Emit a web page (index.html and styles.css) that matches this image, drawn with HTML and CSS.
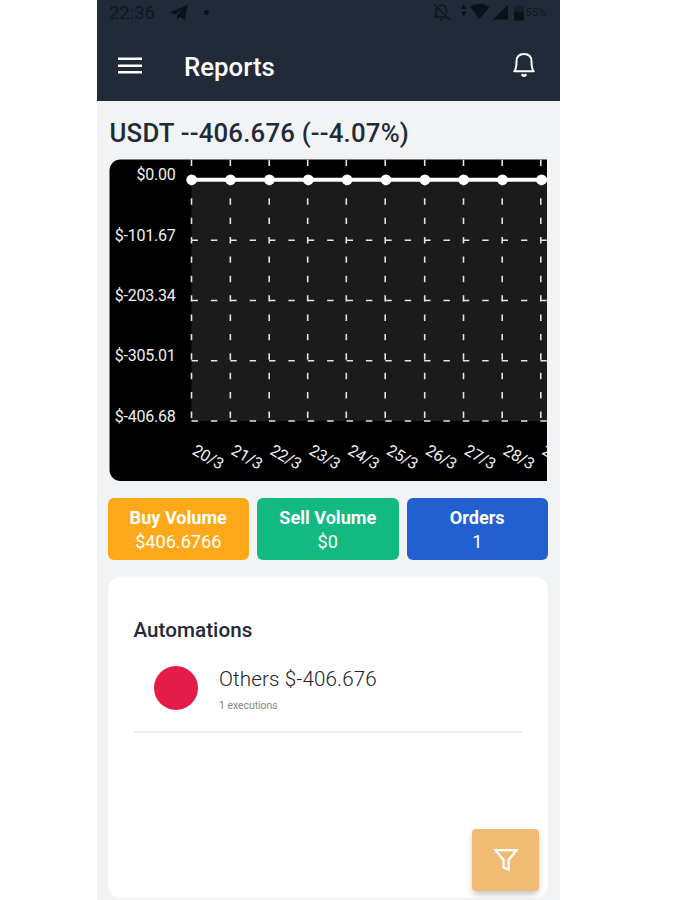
FILE: index.html
```
<!DOCTYPE html>
<html lang="en">
<head>
<meta charset="utf-8">
<title>Reports</title>
<link rel="stylesheet" href="styles.css">
</head>
<body>
<div class="phone">
  <header class="header">
    <div class="status">
      <span class="clock">22:36</span>
      <svg class="telegram" width="20" height="17" viewBox="0 0 20 17"><path d="M.5 8.500 18.500 1 16 16 10.500 13 8 15.500V11L14 5 6 10.500Z"/></svg>
      <i class="dot"></i>
      <svg class="signals" width="92" height="20" viewBox="0 0 92 20">
        <g fill="none" stroke="#10161f" stroke-width="1.600"><path d="M2 2 18 18M5 5.500C3.500 9 5 12 3 15H15M7 4C11 1.500 14.500 4 14.500 8V12M8 17.500H11"/></g>
        <path d="M29 7 31.700 2 34.500 7ZM29 9.500H34.500L31.700 14.500Z"/>
        <path d="M38 5Q47.500 -1.500 57.500 5L47.700 17Z"/>
        <path d="M61 17.500 76 3V17.500Z"/>
        <path d="M82 4.500H84.500V3H89.500V4.500H92V10H82Z" opacity=".45"/><path d="M82 10H92V18.500H82Z"/>
      </svg>
      <span class="battery">55%</span>
    </div>
    <div class="bar">
      <svg class="menu" width="24" height="17" viewBox="0 0 24 17"><path d="M0 1.800H24M0 8.700H24M0 15.200H24" stroke="#fff" stroke-width="2.600"/></svg>
      <h1 class="title">Reports</h1>
      <svg class="bell" width="24" height="27" viewBox="0 0 24 27" fill="none" stroke="#fff" stroke-width="2"><path d="M2.300 19.300C4.300 17 4.500 15 4.500 9.500C4.500 4.500 7.500 2 12 2S19.500 4.500 19.500 9.500C19.500 15 19.700 17 21.700 19.300Z" stroke-linejoin="round"/><path d="M9.800 22.300Q12 25.500 14.200 22.300" stroke-width="2.400"/></svg>
    </div>
  </header>
  <main class="content">
    <h2 class="balance">USDT --406.676 (--4.07%)</h2>
    <svg class="chart" width="438" height="322" viewBox="109 159 438 322">
      <defs>
        <clipPath id="frame"><path d="M547 159.500H120.500A11 11 0 0 0 109.500 170.500V470A11 11 0 0 0 120.500 481H547Z"/></clipPath>
      </defs>
      <g clip-path="url(#frame)">
        <path d="M109 159H548V482H109Z"/>
        <path d="M191.500 180H548V421H191.500Z" fill="#1b1b1b"/>
        <g class="grid">
          <path d="M191.500 240.300H547M191.500 300.500H547M191.500 360.800H547M191.500 421H547"/>
          <path d="M191.500 159.500V421M230.350 159.500V421M269.200 159.500V421M307.700 159.500V421M346.300 159.500V421M385.200 159.500V421M424.700 159.500V421M463.500 159.500V421M502.200 159.500V421M540.800 159.500V421"/>
        </g>
        <path d="M191.500 179.800H548" stroke="#fff" stroke-width="4"/>
        <g fill="#fff">
          <circle cx="191.700" cy="179.800" r="5.400"/><circle cx="230.500" cy="179.800" r="5.400"/><circle cx="269.400" cy="179.800" r="5.400"/><circle cx="308.300" cy="179.800" r="5.400"/><circle cx="347.100" cy="179.800" r="5.400"/><circle cx="386" cy="179.800" r="5.400"/><circle cx="424.900" cy="179.800" r="5.400"/><circle cx="463.700" cy="179.800" r="5.400"/><circle cx="502.500" cy="179.800" r="5.400"/><circle cx="541.500" cy="179.800" r="5.400"/>
        </g>
        <g class="label" text-anchor="end">
          <text x="175.500" y="180">$0.00</text><text x="175.500" y="240.500">$-101.67</text><text x="175.500" y="301">$-203.34</text><text x="175.500" y="361">$-305.01</text><text x="175.500" y="421.500">$-406.68</text>
        </g>
        <g class="label">
          <text transform="translate(191.200 453.500) rotate(30)">20/3</text><text transform="translate(230.100 453.500) rotate(30)">21/3</text><text transform="translate(269 453.500) rotate(30)">22/3</text><text transform="translate(307.900 453.500) rotate(30)">23/3</text><text transform="translate(346.700 453.500) rotate(30)">24/3</text><text transform="translate(385.600 453.500) rotate(30)">25/3</text><text transform="translate(424.400 453.500) rotate(30)">26/3</text><text transform="translate(463.300 453.500) rotate(30)">27/3</text><text transform="translate(502.100 453.500) rotate(30)">28/3</text><text transform="translate(541 453.500) rotate(30)">29/3</text>
        </g>
      </g>
    </svg>
    <section class="stats">
      <div class="stat buy"><b>Buy Volume</b><span>$406.6766</span></div>
      <div class="stat sell"><b>Sell Volume</b><span>$0</span></div>
      <div class="stat orders"><b>Orders</b><span>1</span></div>
    </section>
    <section class="card">
      <h3 class="heading">Automations</h3>
      <div class="row">
        <i class="swatch"></i>
        <div class="info"><p class="name">Others $-406.676</p><p class="note">1 executions</p></div>
      </div>
    </section>
  </main>
  <button class="filter" aria-label="Filter">
    <svg width="26" height="24" viewBox="0 0 26 24" fill="none" stroke="#fff" stroke-width="2.300"><path d="M2.500 2.200H23.500L15.700 12V21.500L10.500 19.500V12Z"/></svg>
  </button>
</div>
</body>
</html>
```
FILE: styles.css
```
* { box-sizing: border-box; margin: 0; padding: 0; }
body { background: #fff; font-family: Roboto, "Liberation Sans", sans-serif; height: 900px; overflow: hidden; }
.phone { position: relative; width: 463.5px; height: 900px; margin-left: 96.5px; background: #f2f3f5; overflow: hidden; }
.header { height: 101px; background: #212a38; }
.status { display: flex; align-items: center; height: 25px; padding: 0 12.5px; color: #10161f; }
.status svg { fill: #0c1119; }
.clock { width: 60px; font-size: 18.4px; line-height: 24px; }
.telegram { margin-top: -1px; }
.dot { width: 5px; height: 5px; margin-left: 14.5px; margin-top: -1px; border-radius: 50%; background: #0c1119; }
.signals { margin-left: auto; margin-top: -2px; }
.battery { width: 22px; margin-left: 2px; font-size: 11.2px; white-space: nowrap; }
.bar { display: flex; align-items: center; height: 76px; padding: 4px 24px 0 21.5px; }
.menu { margin-top: 0; }
.title { margin-left: 42px; padding-top: 3px; color: #fff; font-size: 25.8px; line-height: 32px; font-weight: 500; }
.bell { margin-left: auto; }
.content { display: flex; flex-direction: column; }
.balance { margin: 16px 0 0 13px; height: 42px; font-size: 25.8px; line-height: 32px; font-weight: 500; letter-spacing: .19px; color: #212a38; white-space: nowrap; }
.chart { display: block; margin-left: 12.5px; flex: none; }
.grid { fill: none; stroke: #e3e3e3; stroke-width: 1.6; stroke-dasharray: 6.45 12.93; }
.label { font-size: 16px; letter-spacing: -.22px; fill: #f0f0f0; }
.stats { display: flex; gap: 8px; margin: 17px 12px 0 11px; }
.stat { flex: 1; height: 61.5px; padding-top: 7.5px; border-radius: 6px; text-align: center; color: #fff; font-size: 18.1px; line-height: 24.5px; }
.stat b, .stat span { display: block; }
.buy { background: #fda91a; }
.sell { background: #12b981; }
.orders { background: #2260cf; }
.card { height: 321.5px; margin: 17px 12px 0 11px; padding: 39px 26px 0; border-radius: 13px; background: #fff; }
.heading { color: #212a38; font-size: 20.6px; line-height: 28px; font-weight: 500; letter-spacing: .06px; }
.row { display: flex; height: 89px; padding: 22px 0 0 20.5px; border-bottom: 2px solid #ededef; }
.swatch { width: 44px; height: 44px; border-radius: 50%; background: #e31d48; }
.info { margin-left: 21px; }
.name { font-size: 20.6px; line-height: 26px; letter-spacing: .13px; color: #222; font-weight: 300; }
.note { margin-top: 7px; font-size: 10.4px; line-height: 13px; color: #858585; }
.filter { position: absolute; right: 21px; bottom: 9.5px; width: 67px; height: 62px; border: 0; border-radius: 4px; background: #f0bc74; box-shadow: 0 4px 7px -1px rgba(0,0,0,.25); display: grid; place-items: center; }
```
